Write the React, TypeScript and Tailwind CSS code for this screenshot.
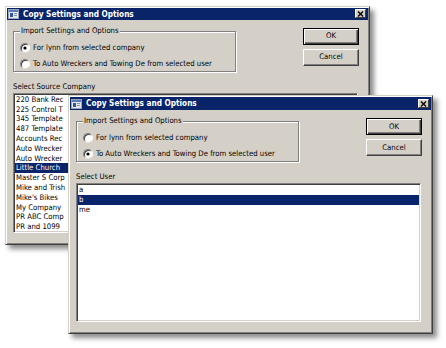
import React from "react";

function Radio({ checked }: { checked?: boolean }) {
  return (
    <span className="relative inline-block w-[10px] h-[10px] shrink-0 rounded-full bg-white border border-t-[#808080] border-l-[#808080] border-r-white border-b-[#e0ddd6] shadow-[inset_1px_1px_#404040]">
      {checked && (
        <span className="absolute left-[3px] top-[3px] w-[2px] h-[2px] rounded-full bg-black shadow-[0_0_0_0.6px_black]" />
      )}
    </span>
  );
}

function TitleIcon() {
  return (
    <svg width="11" height="10" viewBox="0 0 11 10" className="shrink-0">
      <rect x="0.5" y="0.5" width="10" height="9" fill="#e8e8e8" stroke="#9aa4b8" />
      <rect x="1" y="1" width="9" height="2" fill="#5a7ab8" />
      <rect x="2" y="4" width="3" height="4" fill="#2f56a0" />
      <rect x="6" y="4" width="3" height="1" fill="#8090b0" />
      <rect x="6" y="6" width="3" height="1" fill="#8090b0" />
    </svg>
  );
}

function CloseBtn() {
  return (
    <div className="w-[11px] h-[9px] bg-[#d4d0c8] border border-t-white border-l-white border-r-[#404040] border-b-[#404040] flex items-center justify-center">
      <svg width="7" height="6" viewBox="0 0 7 6">
        <path d="M1 0.5 L6 5.5 M6 0.5 L1 5.5" stroke="black" strokeWidth="1.4" />
      </svg>
    </div>
  );
}

type WinProps = {
  pos: string;
  option: number;
  listLabel: string;
  items: string[];
  selected: number;
};

function Win({ pos, option, listLabel, items, selected }: WinProps) {
  return (
    <div
      className={`absolute ${pos} w-[365px] h-[239px] flex flex-col bg-[#d4d0c8] border border-t-[#d4d0c8] border-l-[#d4d0c8] border-r-[#404040] border-b-[#404040] p-[1px] shadow-[inset_1px_1px_white,inset_-1px_-1px_#808080,4px_4px_5px_rgba(0,0,0,0.45)]`}
    >
      <div className="h-[13px] bg-[#0a246a] flex items-center pl-[1px] pr-[2px]">
        <TitleIcon />
        <span className="ml-[4px] text-white font-bold text-[8.2px] leading-none whitespace-nowrap">
          Copy Settings and Options
        </span>
        <div className="ml-auto">
          <CloseBtn />
        </div>
      </div>
      <div className="flex-1 flex flex-col px-[6px] pb-[10px]">
        <div className="flex items-start">
          <div className="relative mt-[11px] w-[223px] h-[41px] border border-[#808080] shadow-[1px_1px_white,inset_1px_1px_white] pt-[8px] pl-[6px]">
            <span className="absolute left-[6px] top-[-6px] px-[1px] bg-[#d4d0c8] leading-[10px] whitespace-nowrap">
              Import Settings and Options
            </span>
            <div className="h-[16px] flex items-center gap-[3px]">
              <Radio checked={option === 0} />
              <span className="leading-none whitespace-nowrap">For lynn from selected company</span>
            </div>
            <div className="h-[16px] flex items-center gap-[3px]">
              <Radio checked={option === 1} />
              <span className="leading-none whitespace-nowrap">
                To Auto Wreckers and Towing De from selected user
              </span>
            </div>
          </div>
          <div className="ml-auto mr-[3px] mt-[8px] flex flex-col gap-[4px]">
            <div className="w-[56px] h-[17px] border border-black bg-[#d4d0c8] shadow-[inset_1px_1px_white,inset_-1px_-1px_#404040,inset_-2px_-2px_#808080] flex items-center justify-center leading-none">
              OK
            </div>
            <div className="w-[56px] h-[17px] bg-[#d4d0c8] border border-t-white border-l-white border-r-[#404040] border-b-[#404040] shadow-[inset_-1px_-1px_#808080] flex items-center justify-center leading-none">
              Cancel
            </div>
          </div>
        </div>
        <div className="mt-[10px] h-[10px] leading-[10px] whitespace-nowrap">{listLabel}</div>
        <div className="mt-[1px] mr-[4px] flex-1 bg-white border border-t-[#808080] border-l-[#808080] border-r-white border-b-white shadow-[inset_1px_1px_#404040,inset_-1px_-1px_#d4d0c8] pt-[1px] px-[1px] overflow-hidden">
          {items.map((it, i) => (
            <div
              key={it + i}
              className={`h-[9.8px] leading-[9.8px] pl-[1px] whitespace-nowrap ${
                i === selected ? "bg-[#0a246a] text-white" : "text-black"
              }`}
            >
              {it}
            </div>
          ))}
        </div>
      </div>
    </div>
  );
}

export default function App() {
  const companies = [
    "220 Bank Rec",
    "225 Control T",
    "345 Template",
    "487 Template",
    "Accounts Rec",
    "Auto Wrecker",
    "Auto Wrecker",
    "Little Church",
    "Master S Corp",
    "Mike and Trish",
    "Mike's Bikes",
    "My Company",
    "PR ABC  Comp",
    "PR and 1099",
  ];
  return (
    <div className="relative w-[446px] h-[348px] bg-white overflow-hidden text-black text-[7.7px] font-['DejaVu_Sans_Condensed','Liberation_Sans',sans-serif]">
      <Win
        pos="left-[5px] top-[6px]"
        option={0}
        listLabel="Select Source Company"
        items={companies}
        selected={7}
      />
      <Win
        pos="left-[68px] top-[95px]"
        option={1}
        listLabel="Select User"
        items={["a", "b", "me"]}
        selected={1}
      />
    </div>
  );
}
